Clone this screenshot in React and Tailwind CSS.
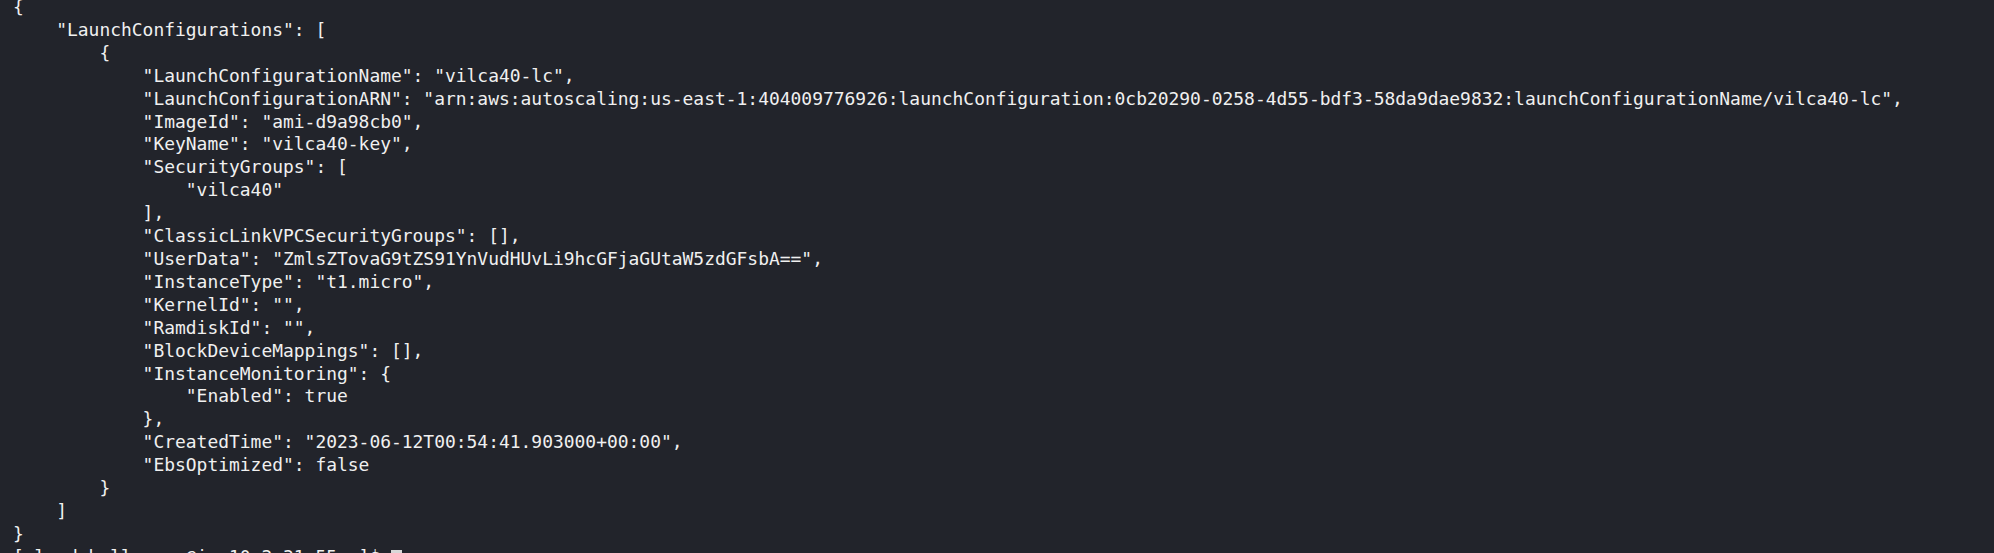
import React from 'react';

// Terminal output: aws autoscaling describe-launch-configurations
const lines = [
  '{',
  '    "LaunchConfigurations": [',
  '        {',
  '            "LaunchConfigurationName": "vilca40-lc",',
  '            "LaunchConfigurationARN": "arn:aws:autoscaling:us-east-1:404009776926:launchConfiguration:0cb20290-0258-4d55-bdf3-58da9dae9832:launchConfigurationName/vilca40-lc",',
  '            "ImageId": "ami-d9a98cb0",',
  '            "KeyName": "vilca40-key",',
  '            "SecurityGroups": [',
  '                "vilca40"',
  '            ],',
  '            "ClassicLinkVPCSecurityGroups": [],',
  '            "UserData": "ZmlsZTovaG9tZS91YnVudHUvLi9hcGFjaGUtaW5zdGFsbA==",',
  '            "InstanceType": "t1.micro",',
  '            "KernelId": "",',
  '            "RamdiskId": "",',
  '            "BlockDeviceMappings": [],',
  '            "InstanceMonitoring": {',
  '                "Enabled": true',
  '            },',
  '            "CreatedTime": "2023-06-12T00:54:41.903000+00:00",',
  '            "EbsOptimized": false',
  '        }',
  '    ]',
  '}',
];

export default function App() {
  return (
    <div className="h-[553px] w-full overflow-hidden bg-[#22242b]">
      <div
        className="-mt-[4px] pl-[13px] text-[17.95px] leading-[22.9px] text-[#f0f0f0] whitespace-pre"
        style={{ fontFamily: '"DejaVu Sans Mono", "Liberation Mono", monospace' }}
      >
        {lines.map((line, i) => (
          <div key={i}>{line}</div>
        ))}
        <div className="flex items-start">
          <span>[cloudshell-user@ip-10-2-31-55 ~]$ </span>
          <span className="mt-[4px] inline-block h-[18px] w-[11px] bg-[#d8d8d8]" />
        </div>
      </div>
    </div>
  );
}
